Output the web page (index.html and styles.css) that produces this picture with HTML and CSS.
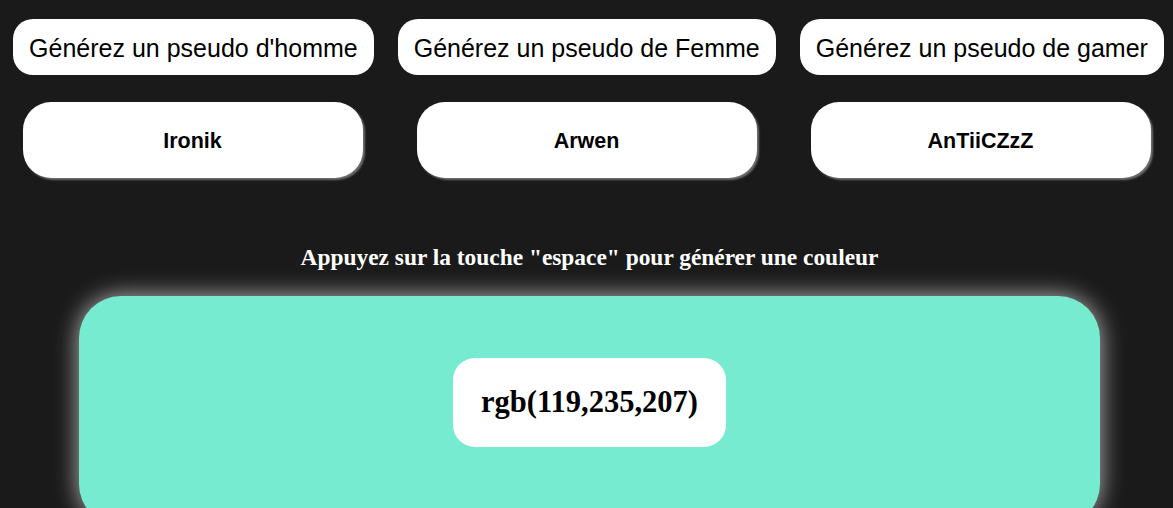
FILE: index.html
```html
<!DOCTYPE html>
<html lang="fr">
<head>
<meta charset="utf-8">
<title>Générateur de pseudo</title>
<link rel="stylesheet" href="styles.css">
</head>
<body>
  <div class="gen-row">
    <button class="gen-btn">Générez un pseudo d'homme</button>
    <button class="gen-btn">Générez un pseudo de Femme</button>
    <button class="gen-btn">Générez un pseudo de gamer</button>
  </div>
  <div class="name-row">
    <div class="name-box">Ironik</div>
    <div class="name-box">Arwen</div>
    <div class="name-box">AnTiiCZzZ</div>
  </div>
  <section class="color-section">
    <h3 class="hint">Appuyez sur la touche "espace" pour générer une couleur</h3>
    <div class="color-box">
      <div class="color-value">rgb(119,235,207)</div>
    </div>
  </section>
</body>
</html>
```

FILE: styles.css
```css
html, body {
  margin: 0;
  padding: 0;
  background: #1a1a1a;
  overflow: hidden;
}

body {
  font-family: "Liberation Sans", Arial, sans-serif;
}

.gen-row {
  display: flex;
  justify-content: center;
  gap: 24px;
  margin-top: 19px;
  padding-left: 4px;
}

.gen-btn {
  box-sizing: border-box;
  height: 56px;
  padding: 3px 16px 0;
  border: none;
  border-radius: 20px;
  background: #fff;
  color: #000;
  font-family: "Liberation Sans", Arial, sans-serif;
  font-size: 25px;
  cursor: pointer;
}

.name-row {
  display: flex;
  justify-content: center;
  gap: 54px;
  margin-top: 27px;
}

.name-box {
  box-sizing: border-box;
  width: 340px;
  height: 76px;
  padding-top: 2px;
  display: flex;
  align-items: center;
  justify-content: center;
  background: #fff;
  border-radius: 28px;
  box-shadow: 2px 2px 2px #6e6e6e;
  font-weight: bold;
  font-size: 21.5px;
  color: #000;
}

.color-section {
  padding-left: 79px;
}

.hint {
  width: 1021px;
  margin: 66px 0 25px;
  text-align: center;
  font-family: "Liberation Serif", "Times New Roman", serif;
  font-weight: bold;
  font-size: 23.4px;
  line-height: 27px;
  color: #fff;
}

.color-box {
  width: 1021px;
  height: 230px;
  box-sizing: border-box;
  padding-top: 62px;
  display: flex;
  justify-content: center;
  align-items: flex-start;
  background: rgb(119, 235, 207);
  border-radius: 42px;
  box-shadow: 0 0 25px rgba(255, 255, 255, 0.7);
}

.color-value {
  padding: 27px 28px;
  background: #fff;
  border-radius: 22px;
  font-family: "Liberation Serif", "Times New Roman", serif;
  font-weight: bold;
  font-size: 30.5px;
  line-height: 35px;
  color: #000;
}
```
